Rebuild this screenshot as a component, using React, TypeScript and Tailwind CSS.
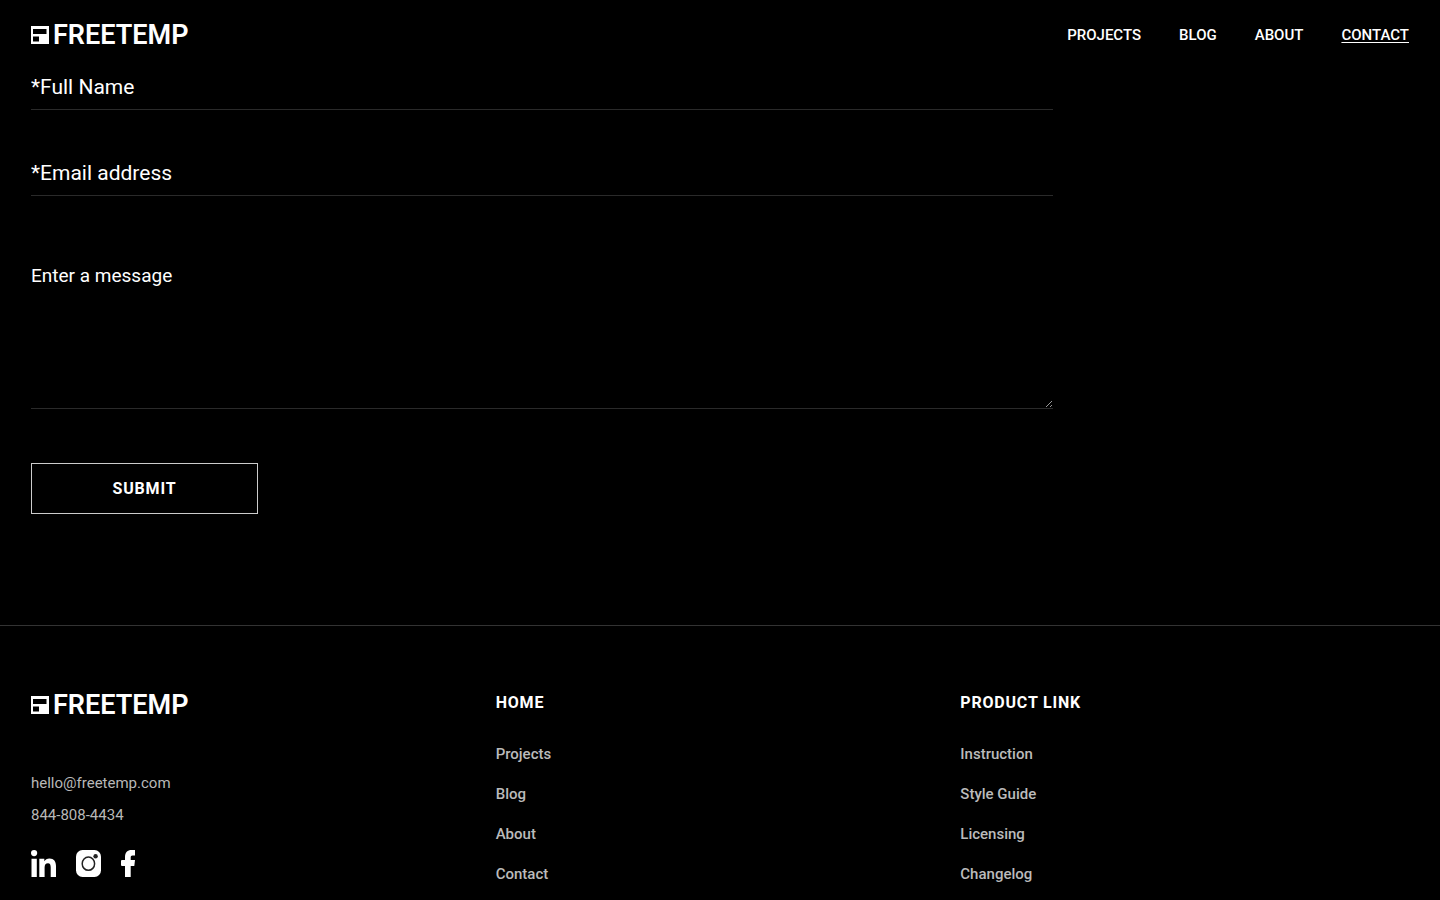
import React from "react";

const navLinks = [
  { label: "PROJECTS", href: "#projects" },
  { label: "BLOG", href: "#blog" },
  { label: "ABOUT", href: "#about" },
  { label: "CONTACT", href: "#contact", current: true },
];

const footerGroups = [
  { title: "HOME", links: ["Projects", "Blog", "About", "Contact"] },
  { title: "PRODUCT LINK", links: ["Instruction", "Style Guide", "Licensing", "Changelog"] },
];

function Logo() {
  return (
    <a href="#home" className="inline-flex h-7 items-center gap-1 text-[27px] leading-7 font-semibold">
      <svg viewBox="0 0 18 18" className="size-[18px]" fill="currentColor" aria-hidden="true">
        <path fillRule="evenodd" d="M0 0H18V18H0ZM2 3V8H15.500V3ZM2 10.500V15.500H8V10.500Z" />
      </svg>
      <span>FREETEMP</span>
    </a>
  );
}

function LinkedInIcon() {
  return (
    <svg viewBox="0 0 25 27" className="h-[27px] w-[25px]" fill="currentColor" aria-hidden="true">
      <circle cx="3.100" cy="3.100" r="3.100" />
      <path d="M.5 8.700H5.800V27H.5ZM8.300 8.700H13.300V11.300C14.300 9.600 16 8.400 18.500 8.400C23 8.400 25 11.300 25 16V27H19.700V17.500C19.700 14.800 19 13.300 17 13.300C14.700 13.300 13.600 14.800 13.600 17.500V27H8.300Z" />
    </svg>
  );
}

function InstagramIcon() {
  return (
    <svg viewBox="0 0 25 27" className="h-[27px] w-[25px]" aria-hidden="true">
      <rect width="25" height="27" rx="6.500" fill="#fff" />
      <ellipse cx="12.400" cy="13.700" rx="6.200" ry="6.600" fill="none" stroke="#222" strokeWidth="1.500" />
      <circle cx="19.600" cy="6.200" r="2.200" fill="#222" />
    </svg>
  );
}

function FacebookIcon() {
  return (
    <svg viewBox="0 0 14 27" className="h-[27px] w-[14px]" fill="currentColor" aria-hidden="true">
      <path d="M4 27V16H1Q0 16 0 15V11Q0 10 1 10H4V7C4 2.500 6.500 0 10.500 0H14V5.500H11.500C10.200 5.500 9.700 6.200 9.700 7.500V10H14L13.300 16H9.700V27Z" />
    </svg>
  );
}

const socials = [
  { name: "LinkedIn", Icon: LinkedInIcon },
  { name: "Instagram", Icon: InstagramIcon },
  { name: "Facebook", Icon: FacebookIcon },
];

export default function App() {
  return (
    <div className="min-h-screen bg-black font-['Roboto',sans-serif] text-white">
      <header className="flex items-center justify-between px-[31px] pt-[21px] pb-[19px]">
        <Logo />
        <nav className="flex gap-[38px] text-[15px] leading-6 font-medium">
          {navLinks.map((link) => (
            <a
              key={link.label}
              href={link.href}
              aria-current={link.current ? "page" : undefined}
              className={link.current ? "underline underline-offset-2" : "hover:underline"}
            >
              {link.label}
            </a>
          ))}
        </nav>
      </header>

      <main className="border-b border-[#333] px-[31px] pb-[111px]">
        <form className="flex w-full max-w-[1022px] flex-col items-start">
          <input
            type="text"
            aria-label="Full Name"
            placeholder="*Full Name"
            className="h-[42px] w-full border-b border-[#2a2a2a] bg-transparent pb-1 text-[21px] placeholder:text-white focus:outline-none"
          />
          <input
            type="email"
            aria-label="Email address"
            placeholder="*Email address"
            className="mt-11 h-[42px] w-full border-b border-[#2a2a2a] bg-transparent pb-1 text-[21px] placeholder:text-white focus:outline-none"
          />
          <textarea
            aria-label="Message"
            placeholder="Enter a message"
            className="mt-15 h-[153px] w-full resize border-b border-[#2a2a2a] bg-transparent pt-2 text-[19px] leading-6 placeholder:text-white focus:outline-none"
          />
          <button
            type="submit"
            className="mt-[54px] h-[51px] w-[227px] border border-[#ccc] text-base leading-6 font-bold tracking-wider"
          >
            SUBMIT
          </button>
        </form>
      </main>

      <footer className="grid grid-cols-3 gap-4 px-[31px] pt-[65px] pb-4">
        <div>
          <Logo />
          <address className="mt-[46px] flex flex-col items-start text-[15px] leading-8 text-[#b8b8b8] not-italic">
            <a href="mailto:hello@freetemp.com">hello@freetemp.com</a>
            <a href="tel:844-808-4434">844-808-4434</a>
          </address>
          <div className="mt-[19px] flex gap-5">
            {socials.map(({ name, Icon }) => (
              <a key={name} href={"#" + name.toLowerCase()} aria-label={name}>
                <Icon />
              </a>
            ))}
          </div>
        </div>
        {footerGroups.map((group) => (
          <section key={group.title}>
            <h2 className="text-base leading-6 font-bold tracking-wider">{group.title}</h2>
            <ul className="mt-[19px] text-[15px] leading-10 font-medium text-[#bbb]">
              {group.links.map((label) => (
                <li key={label}>
                  <a href={"#" + label.toLowerCase().replace(" ", "-")} className="hover:text-white">
                    {label}
                  </a>
                </li>
              ))}
            </ul>
          </section>
        ))}
      </footer>
    </div>
  );
}
